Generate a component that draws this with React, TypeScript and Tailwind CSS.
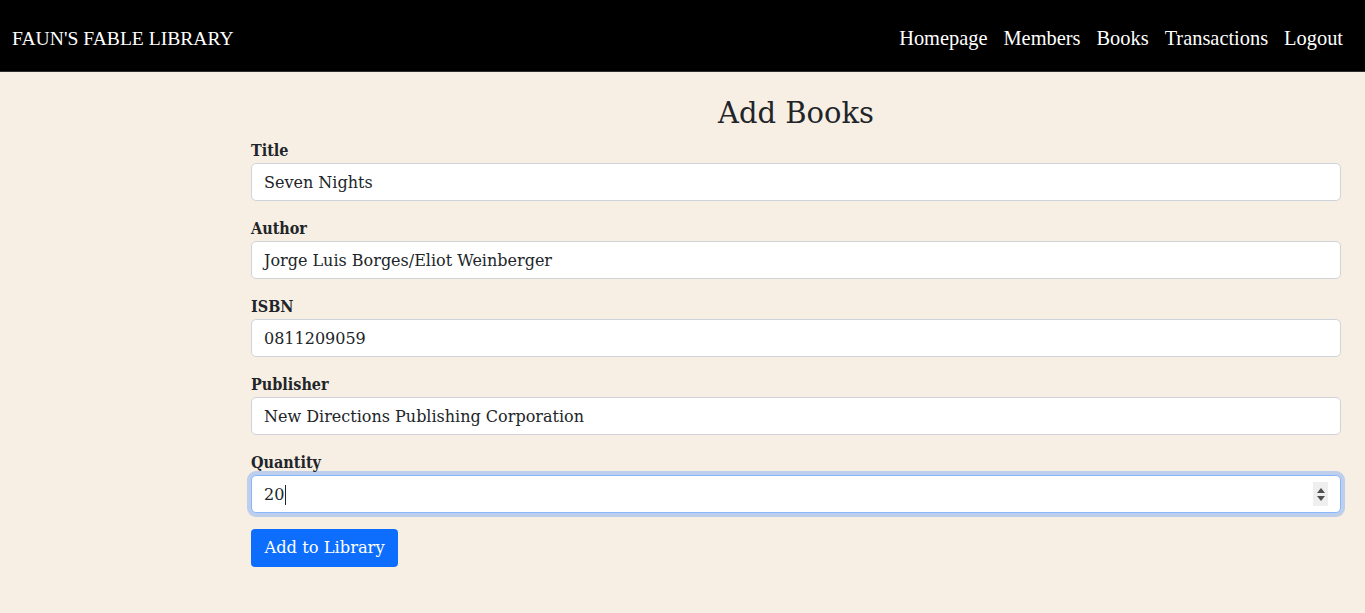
import React from "react";

const fields = [
  { label: "Title", value: "Seven Nights" },
  { label: "Author", value: "Jorge Luis Borges/Eliot Weinberger" },
  { label: "ISBN", value: "0811209059" },
  { label: "Publisher", value: "New Directions Publishing Corporation" },
];

const labelCls =
  "block text-[16px] leading-[24px] font-bold font-['DejaVu_Serif_Condensed','DejaVu_Serif',serif]";

export default function App() {
  return (
    <div className="min-h-[613px] bg-[#f8efe4] text-[#212529] font-['DejaVu_Serif',serif]">
      <nav className="h-[72px] bg-black flex items-center justify-between pl-[12px] pr-[22px] pt-[6px] font-['Liberation_Serif',serif] text-white text-[19.6px] border-b border-[#e8e8e8]/20">
        <span>FAUN'S FABLE LIBRARY</span>
        <div className="flex items-center gap-[16px] text-[20.4px]">
          <span>Homepage</span>
          <span>Members</span>
          <span>Books</span>
          <span>Transactions</span>
          <span>Logout</span>
        </div>
      </nav>
      <main className="pl-[251px] pr-[24px] pt-[23px] pb-[40px]">
        <h2 className="text-center text-[29px] leading-[34px] mb-[9px] font-normal pt-[1px]">Add Books</h2>
        {fields.map((f) => (
          <div key={f.label} className="mb-[16px]">
            <label className={labelCls}>{f.label}</label>
            <div className="h-[38px] bg-white border border-[#ced4da] rounded-[5px] px-[12px] flex items-center text-[16px] pt-[1px]">
              {f.value}
            </div>
          </div>
        ))}
        <div className="mb-[16px]">
          <label className={labelCls}>Quantity</label>
          <div className="h-[38px] bg-white border border-[#86b7fe] rounded-[5px] px-[12px] flex items-center justify-between text-[16px] shadow-[0_0_0_4px_rgba(13,110,253,0.25)]">
            <span className="flex items-center pt-[1px]">
              20<span className="inline-block w-px h-[20px] bg-[#212529] ml-px"></span>
            </span>
            <span className="w-[15px] h-[24px] bg-[#efefef] flex flex-col items-center justify-center gap-[3px]">
              <svg width="8" height="5" viewBox="0 0 8 5"><path d="M0 5 L4 0 L8 5 Z" fill="#505050" /></svg>
              <svg width="8" height="5" viewBox="0 0 8 5"><path d="M0 0 L4 5 L8 0 Z" fill="#505050" /></svg>
            </span>
          </div>
        </div>
        <button className="h-[38px] w-[147px] bg-[#0d6efd] text-white text-[16.3px] rounded-[4px] pt-[1px]">Add to Library</button>
      </main>
    </div>
  );
}
